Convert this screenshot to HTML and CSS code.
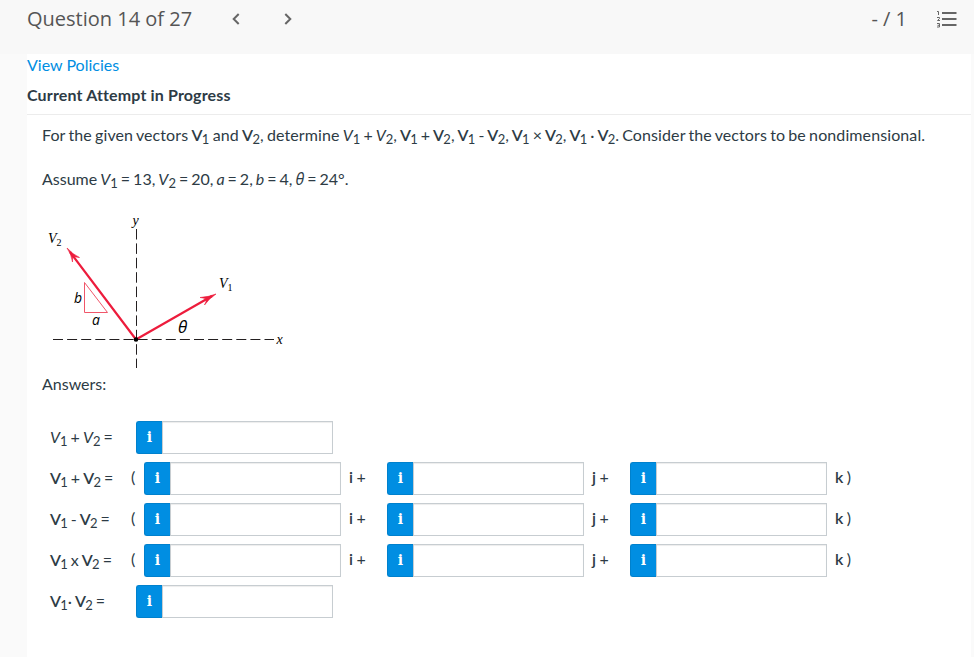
FILE: index.html
```
<!DOCTYPE html>
<html lang="en">
<head>
  <meta charset="UTF-8">
  <meta name="viewport" content="width=device-width, initial-scale=1.0">
  <title>Question 14 of 27</title>
  <link rel="stylesheet" href="styles.css">
</head>
<body>

  <header class="header">
    <h1 class="title">Question 14 of 27</h1>
    <button class="nav-btn" aria-label="Previous">
      <svg width="8" height="12" viewBox="0 0 8 12"><path d="M6.7 1 L1.7 6 L6.7 11"/></svg>
    </button>
    <button class="nav-btn next" aria-label="Next">
      <svg width="8" height="12" viewBox="0 0 8 12"><path d="M1.3 1 L6.3 6 L1.3 11"/></svg>
    </button>
    <span class="score">- / 1</span>
    <button class="list-btn" aria-label="Question list">
      <svg width="20" height="18" viewBox="0 0 20 18">
        <path class="bars" d="M5 3h14.5M5 9h14.5M5 15h14.5"/>
        <path class="nums" d="M0 1.5h1.5V5M0 7.5h2.5v1L.5 10.500h2.500M0 13.500h2.500v3.500H0M.5 15.300h2"/>
      </svg>
    </button>
  </header>

  <main class="content">
    <a class="policies" href="#">View Policies</a>
    <h2 class="attempt">Current Attempt in Progress</h2>

    <div class="question">
      <p class="prompt">For the given vectors <b>V</b><sub>1</sub> and <b>V</b><sub>2</sub>, determine <span class="math"><i>V</i><sub>1</sub> + <i>V</i><sub>2</sub>, <b>V</b><sub>1</sub> + <b>V</b><sub>2</sub>, <b>V</b><sub>1</sub> - <b>V</b><sub>2</sub>, <b>V</b><sub>1</sub> × <b>V</b><sub>2</sub>, <b>V</b><sub>1</sub> · <b>V</b><sub>2</sub>.</span> Consider the vectors to be nondimensional.</p>
      <p class="given math">Assume <i>V</i><sub>1</sub> = 13, <i>V</i><sub>2</sub> = 20, <i>a</i> = 2, <i>b</i> = 4, <i class="angle">θ</i> = 24°.</p>

      <svg class="figure" width="250" height="162" viewBox="42 210 250 162">
        <!-- axes -->
        <path class="axis" d="M136.500 229V368" stroke-dasharray="10.500 3.900"/>
        <path class="axis" d="M53 339.500H274" stroke-dasharray="10 4.100"/>
        <!-- slope triangle -->
        <path class="slope" d="M84.500 282.500V312.500H107.500Z"/>
        <!-- vectors -->
        <path class="vector" d="M136 339.500L70 252M136 339.500L212 296"/>
        <path class="head" d="M67 248Q73 254.500 79.500 257.500Q75 257 73 256Q72.500 258.500 72.500 262Q71.500 254.500 67 248Z"/>
        <path class="head" d="M216 294Q209 298.500 204.500 305Q206.500 301 206.500 299Q204.500 298 200 297.500Q208.500 297 216 294Z"/>
        <circle cx="136" cy="339.500" r="2.300"/>
        <text class="serif" x="132.500" y="225">y</text>
        <text class="serif" x="276.500" y="343.500">x</text>
        <text class="serif" x="48" y="243">V<tspan class="idx" dy="3">2</tspan></text>
        <text class="serif" x="219" y="288">V<tspan class="idx" dy="3">1</tspan></text>
        <text class="sans" x="74" y="303">b</text>
        <text class="sans" x="92" y="325">a</text>
        <text class="sans theta" x="178" y="333">θ</text>
      </svg>

      <p class="answers-title">Answers:</p>

      <div class="answers">
        <div class="row">
          <span class="label math"><i>V</i><sub>1</sub> + <i>V</i><sub>2</sub> =</span>
          <span class="open"></span>
          <span class="field"><span class="info">i</span><input type="text"></span>
        </div>
        <div class="row vec">
          <span class="label math"><b>V</b><sub>1</sub> + <b>V</b><sub>2</sub> =</span>
          <span class="open">(</span>
          <span class="field"><span class="info">i</span><input type="text"></span>
          <span class="unit"><b>i</b> +</span>
          <span class="field"><span class="info">i</span><input type="text"></span>
          <span class="unit"><b>j</b> +</span>
          <span class="field"><span class="info">i</span><input type="text"></span>
          <span class="unit"><b>k</b> )</span>
        </div>
        <div class="row vec">
          <span class="label math"><b>V</b><sub>1</sub> - <b>V</b><sub>2</sub> =</span>
          <span class="open">(</span>
          <span class="field"><span class="info">i</span><input type="text"></span>
          <span class="unit"><b>i</b> +</span>
          <span class="field"><span class="info">i</span><input type="text"></span>
          <span class="unit"><b>j</b> +</span>
          <span class="field"><span class="info">i</span><input type="text"></span>
          <span class="unit"><b>k</b> )</span>
        </div>
        <div class="row vec">
          <span class="label math"><b>V</b><sub>1</sub> x <b>V</b><sub>2</sub> =</span>
          <span class="open">(</span>
          <span class="field"><span class="info">i</span><input type="text"></span>
          <span class="unit"><b>i</b> +</span>
          <span class="field"><span class="info">i</span><input type="text"></span>
          <span class="unit"><b>j</b> +</span>
          <span class="field"><span class="info">i</span><input type="text"></span>
          <span class="unit"><b>k</b> )</span>
        </div>
        <div class="row">
          <span class="label math"><b>V</b><sub>1</sub>· <b>V</b><sub>2</sub> =</span>
          <span class="open"></span>
          <span class="field"><span class="info">i</span><input type="text"></span>
        </div>
      </div>
    </div>
  </main>

</body>
</html>
```
FILE: styles.css
```
* {
  box-sizing: border-box;
}

body, h1, h2, p {
  margin: 0;
  padding: 0;
}

body {
  height: 657px;
  overflow: hidden;
  background: #fafafa;
  color: #2d3b45;
  font: 16px/20px Lato, sans-serif;
}

.header {
  display: flex;
  align-items: center;
  height: 54px;
  padding: 0 17px 16px 27px;
  background: #f8f8f8;
  color: #555;
  font-family: "Open Sans", sans-serif;
}

.title {
  width: 205px;
  font-size: 20px;
  font-weight: 400;
  white-space: nowrap;
}

.nav-btn, .list-btn {
  display: flex;
  padding: 0;
  border: 0;
  background: none;
}

.nav-btn.next {
  margin-left: 44px;
}

.nav-btn path {
  fill: none;
  stroke: #666;
  stroke-width: 2;
}

.score {
  margin-left: auto;
  margin-right: 30px;
  font-size: 20px;
}

.bars {
  stroke: #666;
  stroke-width: 2;
}

.nums {
  fill: none;
  stroke: #666;
}

.content {
  height: 603px;
  margin: 0 3px 0 27px;
  background: #fff;
}

.policies {
  display: block;
  padding-top: 1px;
  color: #008ee2;
  text-decoration: none;
}

.attempt {
  height: 40px;
  padding-top: 10px;
  border-bottom: 1px solid #ececec;
  font-size: 16px;
  font-weight: 700;
  letter-spacing: .15px;
}

.question {
  padding: 10px 0 0 15px;
}

b {
  margin-right: -.7px;
  font-weight: 600;
}

sub {
  font-size: 13px;
  line-height: 0;
  vertical-align: -3px;
}

.prompt {
  letter-spacing: .1px;
  word-spacing: -1px;
  white-space: nowrap;
}

.math {
  letter-spacing: 0;
  word-spacing: -1.1px;
}

.angle {
  font-family: "Open Sans", sans-serif;
}

.given {
  margin-top: 24px;
}

.figure {
  display: block;
  margin-top: 21px;
}

.axis {
  fill: none;
  stroke: #231f20;
  stroke-width: 1;
}

.slope {
  fill: none;
  stroke: #f0566a;
}

.vector {
  fill: none;
  stroke: #ed1c3c;
  stroke-width: 2.2;
}

.head {
  fill: #ed1c3c;
  stroke: #ed1c3c;
  stroke-width: .6;
}

.serif {
  font: italic 14px "Liberation Serif", serif;
}

.idx {
  font-size: 10px;
  font-style: normal;
}

.sans {
  font: italic 14px "Open Sans", sans-serif;
}

.theta {
  font-size: 17px;
}

.answers-title {
  margin-top: 2px;
}

.answers {
  display: flex;
  flex-direction: column;
  gap: 8px;
  padding: 27px 0 0 8px;
}

.row {
  display: flex;
  align-items: center;
  height: 33px;
  white-space: nowrap;
}

.label {
  width: 81px;
  padding-bottom: 1px;
}

.open {
  width: 5px;
  padding-bottom: 3px;
}

.vec .open {
  width: 13px;
}

.field {
  display: flex;
  width: 197px;
  height: 33px;
}

.info {
  width: 26px;
  border: 1px solid #0081cd;
  border-right: 0;
  border-radius: 3px 0 0 3px;
  background: #008ee2;
  color: #fff;
  font: bold 14px/30px "DejaVu Serif", serif;
  text-align: center;
}

.field input {
  width: 171px;
  padding: 4px 6px;
  border: 1px solid #c7cdd1;
  border-radius: 0;
  background: #fff;
  box-shadow: inset 0 1px 1px rgba(0, 0, 0, .075);
  font: inherit;
}

.unit {
  width: 46px;
  padding: 0 0 3px 8px;
}
```
